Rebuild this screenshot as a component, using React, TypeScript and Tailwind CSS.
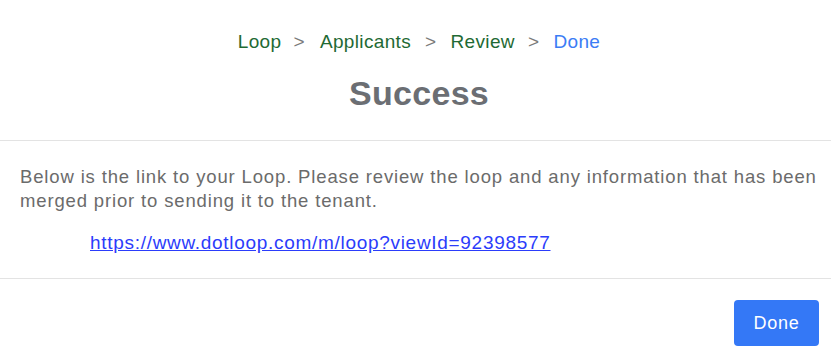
export default function App() {
  return (
    <div className="w-[831px] h-[360px] bg-white font-['Liberation_Sans',Arial,sans-serif] overflow-hidden">
      <div className="flex flex-col items-center pt-[29px] h-[141px] border-b border-[#e3e3e3]">
        <div className="flex items-center text-[19px] tracking-[0.35px] leading-[26px] ml-[7px]">
          <span className="text-[#1f6a34]">Loop</span>
          <span className="text-[#7a7a7a] ml-[12px] mr-[15px]">&gt;</span>
          <span className="text-[#1f6a34]">Applicants</span>
          <span className="text-[#7a7a7a] ml-[14px] mr-[14px]">&gt;</span>
          <span className="text-[#1f6a34]">Review</span>
          <span className="text-[#7a7a7a] ml-[13px] mr-[14px]">&gt;</span>
          <span className="text-[#3b7cf5]">Done</span>
        </div>
        <h1 className="mt-[18px] ml-[7px] text-[34px] tracking-[0.3px] leading-[40px] font-bold text-[#6b6e73]">Success</h1>
      </div>
      <div className="h-[138px] border-b border-[#e3e3e3] pl-[20px] pr-[4px] pt-[24px]">
        <p className="text-[18.5px] tracking-[0.85px] leading-[24px] text-[#6b6b6b]">
          Below is the link to your Loop. Please review the loop and any information that has been merged prior to sending it to the tenant.
        </p>
        <div className="pl-[70px] mt-[18px]">
          <a href="#" className="text-[19px] tracking-[0.7px] leading-[24px] text-[#2b3cfb] underline">https://www.dotloop.com/m/loop?viewId=92398577</a>
        </div>
      </div>
      <div className="flex justify-end pr-[12px] pt-[21px]">
        <button className="w-[85px] h-[46px] rounded-[4px] bg-[#3478f6] text-white text-[18px] tracking-[0.8px] font-medium">Done</button>
      </div>
    </div>
  );
}
